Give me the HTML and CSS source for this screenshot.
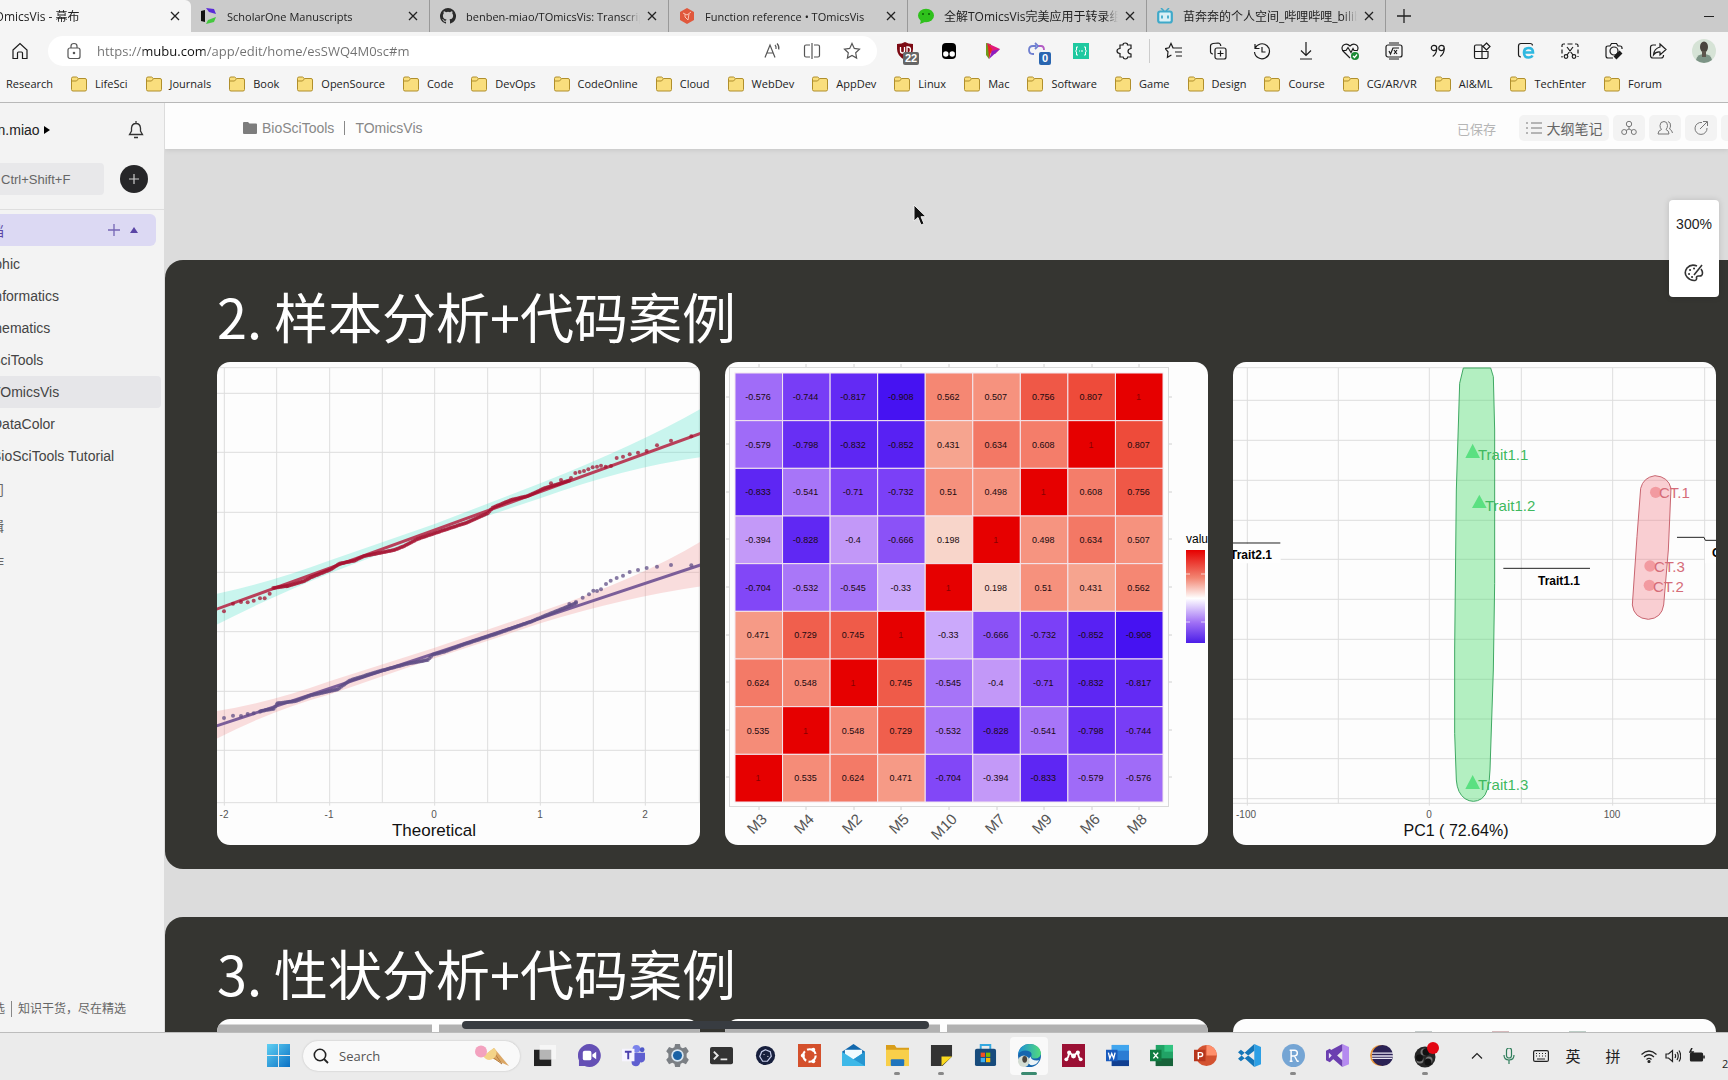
FILE: index.html
```html
<!DOCTYPE html>
<html lang="zh-CN">
<head>
<meta charset="utf-8">
<title>TOmicsVis - 幕布</title>
<link rel="stylesheet" href="styles.css">
</head>
<body>
<svg class="defs" aria-hidden="true">
  <defs>
    <symbol id="folder" viewBox="0 0 16 16"><path d="M.5 3V2.500Q.5 1 2 1h3.500l2 1.500H14q1.500 0 1.500 1.500v9.500Q15.500 15 14 15H2Q.5 15 .5 13.500z" fill="#f9de7d" stroke="#b08f2c"/><path d="M.5 5H5.500L7.500 2.800" fill="none" stroke="#b08f2c"/></symbol>
    <symbol id="close" viewBox="0 0 10 10"><path d="M1 1l8 8M9 1L1 9" stroke="#222" stroke-width="1.300"/></symbol>
    <linearGradient id="win" x1="0" y1="0" x2="1" y2="1"><stop offset="0" stop-color="#5fd0f3"/><stop offset="1" stop-color="#0a70c4"/></linearGradient>
    <linearGradient id="edge" x1="0" y1="0" x2="1" y2="0"><stop offset="0" stop-color="#1b8fd8"/><stop offset="1" stop-color="#53dc7b"/></linearGradient>
    <linearGradient id="legend" x1="0" y1="0" x2="0" y2="1"><stop offset="0" stop-color="#e60000"/><stop offset=".3" stop-color="#f28572"/><stop offset=".52" stop-color="#fff"/><stop offset=".78" stop-color="#a070f5"/><stop offset="1" stop-color="#4b1de8"/></linearGradient>
  </defs>
</svg>

<nav class="tabs" aria-label="Tabs">
  <div class="tab tab-active"><a href="#" class="tab-title">TOmicsVis - 幕布</a><button class="tab-close" aria-label="Close"><svg><use href="#close"/></svg></button></div>
  <div class="tab"><svg class="fav" viewBox="0 0 16 16"><path d="M0 3l4-1v12l-4-1z" fill="#111"/><path d="M5 0l8 1 2 5-7-2z" fill="#5a2bd8"/><path d="M5 16l8-2 2-5-8 3z" fill="#45c93f"/></svg><a href="#" class="tab-title">ScholarOne Manuscripts</a><button class="tab-close" aria-label="Close"><svg><use href="#close"/></svg></button></div>
  <div class="tab"><svg class="fav" viewBox="0 0 16 16"><path fill="#2b2b2b" d="M8 0a8 8 0 0 0-2.530 15.590c.4.070.55-.17.550-.38v-1.490c-2.230.48-2.700-.95-2.700-.95-.36-.92-.89-1.170-.89-1.170-.73-.5.050-.49.050-.49.810.060 1.230.83 1.230.83.720 1.230 1.880.87 2.340.67.070-.52.280-.87.510-1.070-1.780-.2-3.650-.89-3.650-3.950 0-.87.310-1.590.82-2.150-.08-.2-.36-1.020.080-2.120 0 0 .67-.21 2.200.82a7.600 7.600 0 0 1 4 0c1.530-1.040 2.200-.82 2.200-.82.440 1.100.16 1.920.080 2.120.51.560.82 1.270.82 2.150 0 3.070-1.870 3.750-3.650 3.950.29.250.54.730.54 1.480v2.190c0 .21.150.46.550.38A8 8 0 0 0 8 0z"/></svg><a href="#" class="tab-title">benben-miao/TOmicsVis: Transcriptome</a><button class="tab-close" aria-label="Close"><svg><use href="#close"/></svg></button></div>
  <div class="tab"><svg class="fav" viewBox="0 0 16 16"><path d="M8 0l7 4v8l-7 4-7-4V4z" fill="#e0583c"/><path d="M4 5l4 2 4-3M6 6v3l3 3M10 6l-1 6" stroke="#fbc5b5" fill="none"/></svg><a href="#" class="tab-title">Function reference • TOmicsVis</a><button class="tab-close" aria-label="Close"><svg><use href="#close"/></svg></button></div>
  <div class="tab"><svg class="fav" viewBox="0 0 16 16"><ellipse cx="8" cy="7.500" rx="8" ry="6.800" fill="#2fc11c"/><path d="M3 12l-1 4 5-2z" fill="#2fc11c"/><circle cx="5" cy="6" r="1" fill="#0b5d05"/><circle cx="11" cy="6" r="1" fill="#0b5d05"/></svg><a href="#" class="tab-title tab-cjk">全解TOmicsVis完美应用于转录组学</a><button class="tab-close" aria-label="Close"><svg><use href="#close"/></svg></button></div>
  <div class="tab"><svg class="fav" viewBox="0 0 16 16"><path d="M4 0l3 3M12 0L9 3" stroke="#3fa9c9" stroke-width="1.500"/><rect x="1.200" y="3.500" width="13.600" height="11" rx="2" fill="#d9f0f6" stroke="#3fa9c9" stroke-width="2.200"/><path d="M5 7.500v3M11 7.500v3" stroke="#3fa9c9" stroke-width="1.800"/></svg><a href="#" class="tab-title tab-cjk">苗奔奔的个人空间_哔哩哔哩_bilibili</a><button class="tab-close" aria-label="Close"><svg><use href="#close"/></svg></button></div>
  <button class="tab-new" aria-label="New tab"><svg viewBox="0 0 14 14"><path d="M7 0v14M0 7h14" stroke="#222" stroke-width="1.300"/></svg></button>
  <button class="minimize" aria-label="Minimize"><svg viewBox="0 0 14 14"><path d="M2 7.500h10" stroke="#222"/></svg></button>
</nav>

<div class="toolbar">
  <button class="home" aria-label="Home"><svg class="ic" viewBox="0 0 18 18"><path d="M2 8l7-6.500L16 8v8.500h-4.500V11q0-1-1-1h-3q-1 0-1 1v5.500H2z"/></svg></button>
  <form class="address">
    <svg class="ic lock" viewBox="0 0 18 18"><rect x="3" y="6" width="12" height="10.500" rx="2"/><path d="M6 6V4q0-2.500 3-2.500T12 4v2"/><circle cx="9" cy="11" r=".7" fill="#555"/></svg>
    <input class="url" aria-label="Address" value="https://mubu.com/app/edit/home/esSWQ4M0sc#m">
    <button class="in-address" type="button" aria-label="Read aloud"><svg class="ic" viewBox="0 0 18 18"><path d="M2 15.500L7 3l5 12.500M3.800 11h6.400M12 3q1.500 1.500 1 4M14 1.500q2.500 2.500 1.700 6"/></svg></button>
    <button class="in-address" type="button" aria-label="Split screen"><svg class="ic" viewBox="0 0 18 18"><path d="M7 3H3Q1.500 3 1.500 4.500v9Q1.500 15 3 15h4M11 3h4q1.500 0 1.500 1.500v9Q16.500 15 15 15h-4M9 1v16"/></svg></button>
    <button class="in-address" type="button" aria-label="Favorite"><svg class="ic" viewBox="0 0 18 18"><path d="M9 1.500l2.300 4.900 5.200.7-3.800 3.700.9 5.300L9 13.500l-4.600 2.600.9-5.300L1.500 7.100l5.200-.7z"/></svg></button>
  </form>
  <div class="exts">
    <button class="ext" aria-label="uBlock"><svg viewBox="0 0 18 18"><path d="M9 0q3 2 8 2v5q0 7-8 11-8-4-8-11V2q5 0 8-2z" fill="#7d0b14"/><path d="M4.500 5v4q0 2 2 2t2-2V5M11 5v6h1q2.500 0 2.500-3T12 5z" fill="none" stroke="#fff" stroke-width="1.300"/></svg><span class="badge">22</span></button>
    <button class="ext" aria-label="Tampermonkey"><svg viewBox="0 0 18 18"><rect x="2" y="1" width="14" height="16" rx="4"/><circle cx="5.800" cy="12" r="2.700" fill="#fff"/><circle cx="12.200" cy="12" r="2.700" fill="#fff"/></svg></button>
    <button class="ext" aria-label="Color picker"><svg viewBox="0 0 18 18"><path d="M2 1l5 1-2 15-3-4z" fill="#6d9c1c"/><path d="M3 1l13 6-5 5-6-2z" fill="#e0197c"/><path d="M4 2l4 5-3 10z" fill="#e8281c"/><path d="M16 7l-11 10 3-8z" fill="#8b1fc0"/></svg></button>
    <button class="ext" aria-label="Sync"><svg viewBox="0 0 18 18" fill="none" stroke-width="1.800"><path d="M8 4H5Q1 4 1 8t4 4h1" stroke="#6f7fd0"/><path d="M9 4h4q3 0 3 4" stroke="#b35cc4"/><path d="M7 1l3 3-3 3" stroke="#6f7fd0"/></svg><span class="badge badge-blue">0</span></button>
    <button class="ext" aria-label="JSON viewer"><svg viewBox="0 0 18 18"><rect x="1" y="1" width="16" height="16" fill="#1fc9a0"/><path d="M6 5H4.500v3L3.500 9l1 1v3H6M12 5h1.500v3l1 1-1 1v3H12M7 9h1M9 9h2" fill="none" stroke="#fff"/></svg></button>
    <button class="ext" aria-label="Extensions"><svg class="ic dark" viewBox="0 0 18 18"><path d="M4 3h3q0-2 2.300-2T11.500 3H15v3.500q-3 .5-3 2.700t3 2.800V15h-3.300q-.2 2-2.300 2t-2.300-2H4v-3.500q-3-.2-3-2.500t3-2.500z"/></svg></button>
    <span class="ext-sep"></span>
    <button class="ext" aria-label="Favorites"><svg class="ic dark" viewBox="0 0 18 18"><path d="M11 6L8 5.800 6 1.500 4 5.800l-3.800.8L3 9.800l-.6 5.500 4-2.300M11 6h6M10 10h7M11 14h6"/></svg></button>
    <button class="ext" aria-label="Collections"><svg class="ic dark" viewBox="0 0 18 18"><rect x="6" y="6" width="11" height="11" rx="2"/><path d="M4 12Q1.500 12 1.500 9.500V4Q1.500 2 4 1.500l5-.5q2.500 0 2.800 3M11.500 8.500v6M8.500 11.500h6"/></svg></button>
    <button class="ext" aria-label="History"><svg class="ic dark" viewBox="0 0 18 18"><path d="M2 6.500A7.500 7.500 0 1 1 1.500 10M2 2v4.500h4.500M9 5v5h3.500"/></svg></button>
    <button class="ext" aria-label="Downloads"><svg class="ic dark" viewBox="0 0 18 18"><path d="M9 0v13M4 8.500L9 13.500l5-5M3 17h12"/></svg></button>
    <button class="ext" aria-label="Browser essentials"><svg class="ic dark" viewBox="0 0 18 18"><path d="M9 16L2 9Q0 6 2 3.500q3.500-3 7 .5 3.500-3.500 7-.5Q18 6 16 9M1 8.500h4l2-3 3 5 2-4 1 2h3"/><circle cx="14" cy="14" r="4" fill="#1c8a36" stroke="none"/><path d="M12 14l1.500 1.500 2.500-3" stroke="#fff"/></svg></button>
    <button class="ext" aria-label="Math solver"><svg class="ic dark" viewBox="0 0 18 18"><rect x="1" y="3" width="16" height="12" rx="2"/><path d="M4 1h10M4 17h10M4 9l1.500 3L8 6h6M9 8l3 4M12 8l-3 4"/></svg></button>
    <button class="ext" aria-label="Citations"><svg class="ic dark" viewBox="0 0 18 18"><circle cx="5" cy="6" r="2.700"/><path d="M7.700 6q0 6-4 8.500"/><circle cx="12.500" cy="6" r="2.700"/><path d="M15.200 6q0 6-4 8.500"/></svg></button>
    <button class="ext" aria-label="Apps"><svg class="ic dark" viewBox="0 0 18 18"><path d="M9 3H3Q1.500 3 1.500 4.500V15q0 1.500 1.500 1.500h10.500Q15 16.500 15 15V9.500H1.500M9 3v13.500M13.500 1L17 4.500 13.500 8 10 4.500z"/></svg></button>
    <button class="ext" aria-label="IE mode"><svg class="ic dark" viewBox="0 0 18 18"><path d="M4 15Q1.500 15 1.500 12.500V4Q1.500 1.500 4 1.500h9q2.500 0 2.500 2"/><path d="M7 10.500h9q0-4.500-4.500-4.500T7 10.800t4.500 4.700q3 0 4-2" stroke="#2fb8e0" stroke-width="2.600"/></svg></button>
    <button class="ext" aria-label="Web capture"><svg class="ic dark" viewBox="0 0 18 18"><path d="M1 5V3.500Q1 2 2.500 2H4M6.500 2h5M14 2h1.500Q17 2 17 3.500V5M1 7.500v4M17 7.500v4M1 14v1.500M17 14v1M6 5l6 8M12 5l-6 8"/><circle cx="5" cy="14.500" r="1.800"/><circle cx="13" cy="14.500" r="1.800"/></svg></button>
    <button class="ext" aria-label="Screenshot"><svg class="ic dark" viewBox="0 0 18 18"><path d="M8 16H3q-2 0-2-2V6q0-2 2-2h2l1.500-2.500h5L13 4h2q2 0 2 2v1"/><circle cx="9" cy="9" r="4"/><path d="M10 16l6-6" stroke-width="4"/></svg></button>
    <button class="ext" aria-label="Share"><svg class="ic dark" viewBox="0 0 18 18"><path d="M7 3H4Q1.500 3 1.500 5.500v8Q1.500 16 4 16h8q2.500 0 2.500-2.500V13M11 2l6 5.500-6 5.500v-3q-4-.5-6.500 3Q5 6.500 11 5z"/></svg></button>
    <button class="profile" aria-label="Profile"><svg viewBox="0 0 24 24"><circle cx="12" cy="12" r="12" fill="#d6e3d6"/><path d="M4 21q1-6 8-6t8 6q-8 6-16 0z" fill="#7d9486"/><ellipse cx="12" cy="8" rx="4" ry="5.500" fill="#4a463f"/><path d="M10 12h4v6h-4z" fill="#5d564d"/></svg></button>
  </div>
</div>

<nav class="bookmarks" aria-label="Bookmarks">
  <a href="#">Research</a>
  <a href="#"><svg><use href="#folder"/></svg>LifeSci</a>
  <a href="#"><svg><use href="#folder"/></svg>Journals</a>
  <a href="#"><svg><use href="#folder"/></svg>Book</a>
  <a href="#"><svg><use href="#folder"/></svg>OpenSource</a>
  <a href="#"><svg><use href="#folder"/></svg>Code</a>
  <a href="#"><svg><use href="#folder"/></svg>DevOps</a>
  <a href="#"><svg><use href="#folder"/></svg>CodeOnline</a>
  <a href="#"><svg><use href="#folder"/></svg>Cloud</a>
  <a href="#"><svg><use href="#folder"/></svg>WebDev</a>
  <a href="#"><svg><use href="#folder"/></svg>AppDev</a>
  <a href="#"><svg><use href="#folder"/></svg>Linux</a>
  <a href="#"><svg><use href="#folder"/></svg>Mac</a>
  <a href="#"><svg><use href="#folder"/></svg>Software</a>
  <a href="#"><svg><use href="#folder"/></svg>Game</a>
  <a href="#"><svg><use href="#folder"/></svg>Design</a>
  <a href="#"><svg><use href="#folder"/></svg>Course</a>
  <a href="#"><svg><use href="#folder"/></svg>CG/AR/VR</a>
  <a href="#"><svg><use href="#folder"/></svg>AI&amp;ML</a>
  <a href="#"><svg><use href="#folder"/></svg>TechEnter</a>
  <a href="#"><svg><use href="#folder"/></svg>Forum</a>
</nav>

<div class="app">
  <aside class="side">
    <div class="user"><span class="user-name">ben.miao</span><svg class="caret" viewBox="0 0 6 8"><path d="M0 0l6 4-6 4z"/></svg><button class="bell" aria-label="Notifications"><svg viewBox="0 0 16 18" fill="none" stroke="#333" stroke-width="1.300"><path d="M8 0v2M1.500 13.500h13L12.500 10V7Q12 2.500 8 2.500T3.500 7v3zM6 16.500h4"/></svg></button></div>
    <div class="find"><button class="find-box">Ctrl+Shift+F</button><button class="add" aria-label="New"><svg viewBox="0 0 12 12"><path d="M6 1v10M1 6h10" stroke="#ccc" stroke-width="1.200"/></svg></button></div>
    <nav class="tree">
      <div class="root"><a href="#">我的文档</a><button aria-label="Add"><svg viewBox="0 0 12 12"><path d="M6 0v12M0 6h12" stroke="#7566b5" stroke-width="1.300"/></svg></button><svg class="tri" viewBox="0 0 8 6"><path d="M0 6l4-6 4 6z" fill="#5a45a5"/></svg></div>
      <a class="node" href="#">Graphic</a>
      <a class="node" href="#">Bioinformatics</a>
      <a class="node" href="#">Mathematics</a>
      <a class="node" href="#">BioSciTools</a>
      <a class="node leaf current" href="#">TOmicsVis</a>
      <a class="node leaf" href="#">DataColor</a>
      <a class="node leaf" href="#">BioSciTools Tutorial</a>
    </nav>
    <nav class="more"><a href="#">最近访问</a><a href="#">最近编辑</a><a href="#">我的协作</a></nav>
    <p class="tip"><a href="#">精选</a><span>知识干货，尽在精选</span></p>
  </aside>

  <main class="doc">
    <header class="doc-head">
      <svg class="crumb-ic" viewBox="0 0 14 12"><path d="M0 1q0-1 1-1h4l1.500 1.500H13q1 0 1 1V11q0 1-1 1H1q-1 0-1-1z" fill="#7d7d7d"/></svg>
      <a href="#">BioSciTools</a><span class="bar"></span><a href="#">TOmicsVis</a>
      <span class="saved">已保存</span>
      <button class="act act-wide"><svg viewBox="0 0 16 14"><path d="M0 2h2M0 7h2M0 12h2M5 2h11M5 7h11M5 12h11"/></svg>大纲笔记</button>
      <button class="act" aria-label="Mind map"><svg viewBox="0 0 16 16"><circle cx="8" cy="4" r="2.700"/><circle cx="3.200" cy="12" r="2.500"/><circle cx="12.800" cy="12" r="2.500"/><path d="M8 7v2M8 9l-3 1.500M8 9l3 1.500"/></svg></button>
      <button class="act" aria-label="Collaborate"><svg viewBox="0 0 16 16"><path d="M7 1.500q3.500 0 3.500 4 0 2.500-1.500 4 3 1 3 4.500H1q0-3.500 3.500-4.500-1.500-1.500-1.500-4 0-4 4-4zM11 1.500q3 1 2.500 4.500-.3 2-1 3 2.500 1 3 4"/></svg></button>
      <button class="act" aria-label="Share"><svg viewBox="0 0 16 16"><path d="M9 2.500A6 6 0 1 0 14 8M7 9l7-7M10 1.500h4.500V6"/></svg></button>
      <button class="act act-cut" aria-label="More"></button>
    </header>
    <div class="canvas">
      <section class="card">
        <h2>2. 样本分析+代码案例</h2>
        <div class="plots">
          <svg class="plot" viewBox="0 0 483 483">
            <g transform="translate(-6 -12) scale(.33333)">
              <path d="M40 53V1367M197 53V1358M356 53V1367M514 53V1358M671 53V1367M830 53V1358M988 53V1367M1147 53V1358M1303 53V1367M1465 53V1358M0 53H1480M0 130H1480M0 307H1480M0 487H1480M0 667H1480M0 845H1480M0 1024H1480M0 1201H1480M0 1358H1480" stroke="#dedede" stroke-width="3"/>
              <path d="M10 733Q170 700 360 630L671 522 988 400Q1300 275 1480 170V320Q1250 350 988 445L671 550 360 668Q170 745 10 828z" fill="#2fe0c4" fill-opacity=".25"/>
              <path d="M10 1084Q170 1060 360 992L671 893 988 785Q1300 680 1480 568V708Q1250 740 988 820L671 925 360 1032Q170 1085 10 1170z" fill="#f08080" fill-opacity=".25"/>
              <path d="M10 780L1480 246" stroke="#b8405a" stroke-width="9"/>
              <path d="M10 1130L1480 641" stroke="#7b5e99" stroke-width="9"/>
              <g id="qq-red" class="qq-red"></g>
              <g id="qq-violet" class="qq-violet"></g>
            </g>
            <g class="tick"><text x="7" y="456">-2</text><text x="112" y="456">-1</text><text x="217" y="456">0</text><text x="323" y="456">1</text><text x="428" y="456">2</text></g>
            <text class="axis axis-large" x="217" y="474">Theoretical</text>
          </svg>
          <svg class="plot" viewBox="0 0 483 483">
            <rect x="4.500" y="5.500" width="439" height="439" fill="none" stroke="#d9d9d9"/>
            <g id="heat" class="heat"></g>
            <g id="heat-axis" class="heat-axis"></g>
            <text class="legend" x="461" y="181">value</text>
            <rect x="461" y="188" width="19" height="93" fill="url(#legend)"/>
            <path d="M461 212h4M476 212h4M461 236h4M476 236h4M461 260h4M476 260h4" stroke="#fff" stroke-opacity=".7"/>
          </svg>
          <svg class="plot" viewBox="0 0 483 483">
            <g transform="translate(-13 -12) scale(.33333)">
              <path d="M82 53V1367M355 53V1360M628 53V1367M904 53V1360M1178 53V1367M1454 53V1360M0 53H1500M0 151H1500M0 271H1500M0 391H1500M0 511H1500M0 628H1500M0 748H1500M0 868H1500M0 988H1500M0 1107H1500M0 1226H1500M0 1346H1500M0 1360H1500" stroke="#dedede" stroke-width="3"/>
              <path d="M40 582H182V640H40zM1455 575H1500V640H1455z" fill="#fefefe"/>
              <path d="M730 54H812L820 80 824 240V700L820 960 810 1260Q808 1330 785 1346 760 1362 735 1346 712 1330 709 1290L704 1150V900L709 420 719 100z" fill="#4cdc6e" fill-opacity=".42" stroke="#3fa862" stroke-width="3"/>
              <path d="M1305 377Q1345 380 1353 415L1345 600 1331 765Q1325 805 1285 808 1242 805 1237 765L1251 560 1262 415Q1270 382 1305 377z" fill="#f3828c" fill-opacity=".38" stroke="#c8646f" stroke-width="3"/>
              <path d="M758 281l22 43h-44zM778 434l22 40h-44zM758 1275l22 42h-44z" fill="#5be081"/>
              <g fill="#f29aa0"><circle cx="1307" cy="427" r="17"/><circle cx="1290" cy="648" r="17"/><circle cx="1288" cy="706" r="17"/></g>
              <path d="M30 579H181M850 655H1110M1371 562H1452l4 9H1500" fill="none" stroke="#222" stroke-width="3"/>
            </g>
            <g class="trait-green"><text x="245" y="98">Trait1.1</text><text x="252" y="149">Trait1.2</text><text x="245" y="428">Trait1.3</text></g>
            <g class="trait-red"><text x="426" y="136">CT.1</text><text x="421" y="210">CT.3</text><text x="420" y="230">CT.2</text></g>
            <g class="trait"><text x="-3" y="197">Trait2.1</text><text x="305" y="223">Trait1.1</text><text x="479" y="195">CT.1</text></g>
            <g class="tick"><text x="13" y="456">-100</text><text x="196" y="456">0</text><text x="379" y="456">100</text></g>
            <text class="axis" x="223" y="474">PC1 ( 72.64%)</text>
          </svg>
        </div>
      </section>
      <section class="card">
        <h2>3. 性状分析+代码案例</h2>
        <div class="plots">
          <svg class="plot" viewBox="0 0 483 483"><path d="M0 5.500H215V483H0zM222 5.500H483V483H222z" fill="#b1b1b1"/></svg>
          <svg class="plot" viewBox="0 0 483 483"><path d="M0 5.500H215V483H0zM222 5.500H483V483H222z" fill="#b1b1b1"/></svg>
          <svg class="plot" viewBox="0 0 483 483"><path d="M182 12h17v9h-17z" fill="#c4cbca"/><path d="M259 12h17v9h-17z" fill="#d5b9bb"/><path d="M336 12h17v9h-17z" fill="#bdcdc6"/></svg>
        </div>
      </section>
      <div class="hscroll"></div>
    </div>
    <div class="zoom-panel"><button>300%</button><button aria-label="Theme"><svg viewBox="0 0 20 18" fill="none" stroke="#333" stroke-width="1.600"><path d="M13 2Q7-.5 3 4-.5 9 3 13q3.500 4 8 3.500 2-.5 1.500-2.500-.3-2 2-2 4 .5 4-3 0-2-1.500-4M18 1l-8 10"/><path d="M6 6h.1M10 4.500h.1M5 10h.1M8 13h.1" stroke-width="2" stroke-linecap="round"/></svg></button></div>
  </main>
</div>

<footer class="taskbar">
  <div class="apps">
    <button class="task" aria-label="Start"><svg viewBox="0 0 24 24"><path d="M0 0h11.500v11.500H0zM12.500 0H24v11.500H12.500zM0 12.500h11.500V24H0zM12.500 12.500H24V24H12.500z" fill="url(#win)"/></svg></button>
    <label class="search"><svg viewBox="0 0 16 16"><circle cx="7" cy="7" r="5.700" fill="none" stroke="#222" stroke-width="1.600"/><path d="M11 11l4 4" stroke="#222" stroke-width="1.800"/></svg><input type="text" placeholder="Search" aria-label="Search"><svg class="cone" viewBox="0 0 36 22"><path d="M11 10l9-7 15 18z" fill="#dba765"/><path d="M14 9l14 10M19 6l9 13" stroke="#b97f3e"/><path d="M9 11q5 7 11 2 5-5 0-10z" fill="#f4d488"/><circle cx="7" cy="6.500" r="6" fill="#f3a2bf"/></svg></label>
    <button class="task" aria-label="Task view"><svg viewBox="0 0 24 24"><path d="M0 6h18v17H0z" fill="#222"/><path d="M6 1h17v15H6z" fill="#f6f6f6"/><path d="M6 6h12v10H6z" fill="#b5b5b5"/></svg></button>
    <button class="task" aria-label="Chat"><svg viewBox="0 0 24 24"><path d="M12 0a12 12 0 1 1-5 23H1v-6A12 12 0 0 1 12 0z" fill="#6550b5"/><rect x="5" y="7" width="9" height="10" rx="2" fill="#fff"/><path d="M15 11l4-3v8l-4-3z" fill="#fff"/></svg></button>
    <button class="task" aria-label="Teams"><svg viewBox="0 0 24 24"><circle cx="15" cy="5" r="4" fill="#7b83eb"/><circle cx="21" cy="6" r="2.500" fill="#5059c9"/><path d="M10 9h9v10q-1 5-6 4-3-1-3-4zM19 9h5v7q-1 4-5 3z" fill="#5f5fd0"/><path d="M0 5h13v13H0z" fill="#f6f4ff"/><path d="M3 8h7M6.500 8v8" stroke="#4b3fae" stroke-width="2"/></svg></button>
    <button class="task" aria-label="Settings"><svg viewBox="0 0 24 24"><path d="M9.500 0h5l.8 3.500 2.200 1L20.800 3l3 4.500-2.300 2.700v3.600l2.300 2.700-3 4.500-3.300-1.500-2.200 1-.8 3.500h-5l-.8-3.500-2.200-1L3.200 21l-3-4.500 2.300-2.700v-3.600L.2 7.500l3-4.500 3.300 1.500 2.200-1z" fill="#7b7f84"/><circle cx="12" cy="12" r="6.500" fill="#d9e7f2"/><circle cx="12" cy="12" r="4.700" fill="#1b62a5"/></svg></button>
    <button class="task" aria-label="Terminal"><svg viewBox="0 0 24 24"><rect y="3" width="24" height="18" rx="2" fill="#333"/><path d="M4 8l4 4-4 4M11 16h7" fill="none" stroke="#e8e8e8" stroke-width="2"/></svg></button>
    <button class="task" aria-label="Clock"><svg viewBox="0 0 24 24"><circle cx="12" cy="12" r="10" fill="#171f3d"/><path d="M12 6l5 2 1 5-4 5H9l-3-5 2-5z" fill="none" stroke="#c3cae8" stroke-width="1.300"/><path d="M10 11h1M14 13h1" stroke="#fff"/></svg></button>
    <button class="task" aria-label="Ubuntu"><svg viewBox="0 0 24 24"><path d="M0 0h24v24H0z" fill="#d4502c"/><circle cx="12" cy="12" r="6.500" fill="none" stroke="#fff" stroke-width="2.200" stroke-dasharray="11 2.600"/><circle cx="5" cy="12" r="2" fill="#fff"/><circle cx="16" cy="6" r="2" fill="#fff"/><circle cx="16" cy="18" r="2" fill="#fff"/></svg></button>
    <button class="task" aria-label="Mail"><svg viewBox="0 0 24 24"><path d="M0 8l12-8 12 8v15H0z" fill="#1268ad"/><path d="M3 6h18v10H3z" fill="#f1fbff"/><path d="M0 8l12 8L24 8v15H0z" fill="#3db8e8"/><path d="M24 8v15L12 16z" fill="#2696d1"/></svg></button>
    <button class="task run" aria-label="File Explorer"><svg viewBox="0 0 24 24"><path d="M0 1h9l2 3h13v19H0z" fill="#d99e1b"/><path d="M0 6h24v17H0z" fill="#f8cf4a"/><rect x="5" y="16" width="14" height="7" rx="1" fill="#1f74bd"/></svg></button>
    <button class="task run" aria-label="Sticky Notes"><svg viewBox="0 0 24 24"><path d="M1 1h22v12L13 23H1z" fill="#333"/><path d="M12 13h11L12 23z" fill="#fbd91e"/></svg></button>
    <button class="task" aria-label="Store"><svg viewBox="0 0 24 24"><path d="M7 6V1h10v5" fill="none" stroke="#35a8e0" stroke-width="2"/><rect x="1" y="5" width="22" height="18" rx="2" fill="#174b7c"/><path d="M7 9h4.500v4.500H7z" fill="#f25022"/><path d="M12.500 9H17v4.500h-4.500z" fill="#7fba00"/><path d="M7 14.500h4.500V19H7z" fill="#3cb0ef"/><path d="M12.500 14.500H17V19h-4.500z" fill="#ffb900"/></svg></button>
    <button class="task run active" aria-label="Edge"><svg viewBox="0 0 24 24"><circle cx="12" cy="12" r="12" fill="#1666ae"/><path d="M0 11Q2 0 12 0t12 9q0 6-7 6-4 0-3-3 1-4-4-5-7-1-10 4z" fill="url(#edge)"/><path d="M13 13q1 5 9 4-3 6-9 5-5-3 0-9z" fill="#ecf4f7"/><circle cx="6" cy="18" r="6" fill="#d3dcd2"/><ellipse cx="7" cy="16" rx="2.500" ry="3.500" fill="#4a463f"/></svg></button>
    <button class="task" aria-label="Mendeley"><svg viewBox="0 0 24 24"><path d="M0 0h24v24H0z" fill="#9b1034"/><g fill="#fff"><circle cx="12" cy="12.500" r="2.600"/><circle cx="7.500" cy="9" r="2.200"/><circle cx="16.500" cy="9" r="2.200"/><circle cx="4.500" cy="16" r="2"/><circle cx="19.500" cy="16" r="2"/></g><path d="M4.500 16q2-1 3-7 2 1 4.500 3.500 2-2.500 4.500-3.500 1 6 3 7" fill="none" stroke="#fff" stroke-width="2"/></svg></button>
    <button class="task" aria-label="Word"><svg viewBox="0 0 24 24"><path d="M6 1h18v22H6z" fill="#2b7cd3"/><path d="M6 1h18v6H6z" fill="#41a5ee"/><path d="M6 17h18v6H6z" fill="#103f91"/><path d="M0 6h12v12H0z" fill="#185abd"/><path d="M2.500 9l1.500 6 2-5 2 5 1.500-6" fill="none" stroke="#fff" stroke-width="1.400"/></svg></button>
    <button class="task" aria-label="Excel"><svg viewBox="0 0 24 24"><path d="M6 1h18v22H6z" fill="#21a366"/><path d="M15 1h9v7h-9z" fill="#33c481"/><path d="M6 15h18v8H6z" fill="#17633a"/><path d="M0 6h12v12H0z" fill="#107c41"/><path d="M3.500 9l5 6M8.500 9l-5 6" stroke="#fff" stroke-width="1.600"/></svg></button>
    <button class="task" aria-label="PowerPoint"><svg viewBox="0 0 24 24"><circle cx="13" cy="12" r="11" fill="#d35230"/><path d="M13 1a11 11 0 0 1 11 11H13z" fill="#ff8f6b"/><path d="M0 6h12v12H0z" fill="#b7361c"/><path d="M4.500 16V9H7q2 0 2 2t-2 2H4.500" fill="none" stroke="#fff" stroke-width="1.500"/></svg></button>
    <button class="task" aria-label="VS Code"><svg viewBox="0 0 24 24"><path d="M17 0l7 3v18l-7 3z" fill="#2c9fe5"/><path d="M17 0v7L3 18l-3-2.500zM17 24v-7L3 6 0 8.500z" fill="#1376b9"/></svg></button>
    <button class="task run" aria-label="RStudio"><svg viewBox="0 0 24 24"><circle cx="12" cy="12" r="12" fill="#75a5d4"/><path d="M8 18h3M9.500 18V6.500M8 6.500h5q3 0 3 3t-3 3H9.500M13 12.500l3 5.500h1.500" fill="none" stroke="#fff" stroke-width="1.500"/></svg></button>
    <button class="task" aria-label="Visual Studio"><svg viewBox="0 0 24 24"><path d="M17 0l7 3v18l-7 3z" fill="#b58af0"/><path d="M17 0v7L4 19l-4-2V7l4-2 13 12v7L0 9" fill="#6b3fb0"/><path d="M3 9v6l3-3z" fill="#ebe3f7"/></svg></button>
    <button class="task" aria-label="Eclipse"><svg viewBox="0 0 24 24"><circle cx="11" cy="12" r="11" fill="#e9963a"/><circle cx="13" cy="12" r="11" fill="#2b2255"/><path d="M2 9.500h22M2 12.500h22M2 15h21" stroke="#e7e4f2" stroke-width="1.400"/></svg></button>
    <button class="task run" aria-label="OBS"><svg class="obs" viewBox="0 0 28 28"><circle cx="14" cy="15" r="10.500" fill="#262626"/><g fill="#777"><circle cx="13" cy="10" r="3.500"/><circle cx="9" cy="18" r="3.500"/><circle cx="18" cy="18" r="3.500"/></g><g fill="#111"><circle cx="15" cy="10" r="3.500"/><circle cx="8.500" cy="16" r="3.500"/><circle cx="17" cy="20" r="3.500"/></g><circle cx="22" cy="6" r="6" fill="#e30613"/></svg></button>
  </div>
  <div class="tray">
    <button aria-label="Hidden icons"><svg viewBox="0 0 16 16"><path d="M3 10.500l5-5 5 5"/></svg></button>
    <button aria-label="Microphone"><svg viewBox="0 0 16 16"><rect x="5.500" y="0" width="5" height="10" rx="2.500" stroke="#2e7d5a"/><path d="M3 7q0 5 5 5t5-5M8 12v4" stroke="#2e7d5a"/></svg></button>
    <button aria-label="Keyboard"><svg viewBox="0 0 16 16"><rect x=".6" y="2.600" width="14.800" height="10.800" rx="1.500"/><path d="M3 5.500h1M6 5.500h1M9 5.500h1M12 5.500h1M3 8h1M6 8h1M9 8h1M12 8h1M4 11h8"/></svg></button>
    <button class="ime">英</button>
    <button class="ime ime-wide">拼</button>
    <button class="sys" aria-label="Wi-Fi"><svg viewBox="0 0 16 16"><path d="M.5 6.500q7.500-7 15 0M3 9q5-4.500 10 0M5.500 11.500q2.500-2.200 5 0"/><circle cx="8" cy="13.500" r="1" fill="#222"/></svg></button>
    <button class="sys" aria-label="Volume"><svg viewBox="0 0 16 16"><path d="M1 6v4h2.500L7.500 13.500v-11L3.500 6zM10 6q1.200 2 0 4M12 4q2.500 4 0 8M14 2.500q3.500 5.500 0 11"/></svg></button>
    <button class="sys" aria-label="Battery"><svg viewBox="0 0 16 16"><rect x="1.500" y="5" width="12" height="8" rx="1" fill="#222"/><path d="M15 7.500v3M3 0L1 4h3L2 8" stroke-width="1.600"/></svg></button>
    <span class="clock">2</span>
  </div>
</footer>

<svg class="cursor" viewBox="0 0 14 22"><path d="M1 1v16l4-3.500L8 21l3-1.300-3-7H13z" fill="#111" stroke="#eee"/></svg>
<script src="script.js"></script>
</body>
</html>
```
FILE: styles.css
```css
* { box-sizing: border-box; }
body {
  margin: 0;
  height: 100vh;
  display: flex;
  flex-direction: column;
  overflow: hidden;
  font-family: "Open Sans", "Noto Sans CJK SC", sans-serif;
  font-size: 11px;
  color: #222;
  background: #f5f5f5;
}
button { border: 0; padding: 0; background: none; font: inherit; color: inherit; display: flex; align-items: center; justify-content: center; flex: none; }
input { border: 0; padding: 0; background: none; font: inherit; outline: 0; min-width: 0; }
a { color: inherit; text-decoration: none; }
svg { flex: none; display: block; }
.defs { position: absolute; width: 0; height: 0; }

/* tab strip */
.tabs { display: flex; height: 32px; flex: none; background: #cbcbcb; }
.tab { display: flex; align-items: center; width: 239px; padding: 0 10px; border-right: 1px solid #999; }
.tab-active { width: 191px; padding-left: 0; border: 0; background: #f5f5f5; border-radius: 0 6px 0 0; }
.tab-active .tab-title { margin-left: -12px; }
.fav { width: 16px; height: 16px; margin-right: 10px; }
.tab-title { flex: 1; overflow: hidden; white-space: nowrap; mask-image: linear-gradient(90deg, #000 92%, transparent); }
.tab-cjk, .tab-active .tab-title { font-size: 12px; }
.tab-close { width: 12px; height: 20px; margin-left: 6px; }
.tab-close svg { width: 10px; height: 10px; }
.tab-new { width: 36px; }
.tab-new svg, .minimize svg { width: 14px; height: 14px; }
.minimize { width: 38px; margin-left: auto; }

/* toolbar */
.toolbar { display: flex; align-items: center; height: 38px; flex: none; }
.home { width: 40px; margin-right: 8px; }
.ic { width: 18px; height: 18px; fill: none; stroke: #555; stroke-width: 1.2; }
.dark, .home .ic { stroke: #1c1c1c; }
.address { flex: 1; display: flex; align-items: center; height: 30px; margin-right: 6px; padding: 0 5px 0 17px; border-radius: 15px; background: #fff; }
.lock { margin-right: 14px; }
.url { flex: 1; font-size: 13px; color: #707070; background: linear-gradient(90deg, #707070 46px, #111 46px 108px, #707070 108px); -webkit-background-clip: text; background-clip: text; -webkit-text-fill-color: transparent; }
.in-address { width: 40px; }
.exts { display: flex; align-items: center; }
.ext { width: 44px; height: 30px; position: relative; }
.ext svg { width: 18px; height: 18px; }
.ext-sep { width: 1px; height: 24px; margin: 0 2px; background: #ccc; }
.badge { position: absolute; left: 20px; top: 16px; padding: 0 2px; border-radius: 2px; background: #666; color: #fff; font: bold 11px/13px "Liberation Sans", sans-serif; }
.badge-blue { left: 24px; padding: 0 3px; background: #2a66b0; }
.profile { width: 48px; }
.profile svg { width: 24px; height: 24px; }

/* bookmarks */
.bookmarks { display: flex; align-items: center; gap: 18px; height: 33px; flex: none; padding: 0 6px 5px; border-bottom: 1px solid #b8b8b8; white-space: nowrap; }
.bookmarks a { display: flex; align-items: center; gap: 8px; }
.bookmarks svg { width: 16px; height: 16px; }

/* application */
.app { flex: 1; display: flex; min-height: 0; font-family: "Liberation Sans", "Noto Sans CJK SC", sans-serif; font-size: 14px; }
.side { width: 165px; flex: none; display: flex; flex-direction: column; overflow: hidden; background: #f3f3f3; border-right: 1px solid #dcdcdc; white-space: nowrap; }
.user { display: flex; align-items: center; height: 54px; padding-right: 20px; }
.user-name { margin-left: -18px; }
.caret { width: 6px; height: 8px; margin-left: 4px; }
.bell { margin-left: auto; }
.bell svg { width: 16px; height: 18px; }
.find { display: flex; align-items: center; justify-content: space-between; height: 53px; padding: 0 16px 8px 0; border-bottom: 1px solid #dedede; }
.find-box { width: 104px; height: 32px; padding-left: 1px; justify-content: flex-start; border-radius: 0 4px 4px 0; background: #e8e8ea; color: #666; font-size: 13px; }
.add { width: 28px; height: 28px; border-radius: 50%; background: #262628; }
.add svg, .root svg { width: 12px; height: 12px; }
.tree { display: flex; flex-direction: column; padding-top: 4px; color: #444; }
.root { display: flex; align-items: center; height: 32px; width: 156px; margin-bottom: 2px; padding-right: 18px; border-radius: 0 6px 6px 0; background: #dcd9f3; color: #5a45a5; }
.root a { margin: 0 auto 0 -52px; }
.root .tri { width: 8px; height: 6px; margin-left: 10px; }
.node { width: 161px; line-height: 32px; text-indent: -29px; border-radius: 0 4px 4px 0; }
.leaf { text-indent: -8px; }
.current { background: #e6e6e9; }
.more { display: flex; flex-direction: column; color: #666; }
.more a { line-height: 36px; text-indent: -52px; }
.tip { display: flex; align-items: center; margin: auto 0 15px; font-size: 12px; line-height: 16px; color: #666; }
.tip a { margin: 0 6px 0 -19px; }
.tip span { padding-left: 6px; border-left: 1px solid #888; }

.doc { flex: 1; min-width: 0; display: flex; flex-direction: column; position: relative; overflow: hidden; }
.doc-head { display: flex; align-items: center; height: 46px; flex: none; padding: 4px 0 0 78px; overflow: hidden; background: #fdfdfd; color: #888; box-shadow: 0 1px 5px #c4c4c4; z-index: 1; }
.crumb-ic { width: 14px; height: 12px; margin-right: 5px; }
.bar { width: 1px; height: 14px; margin: 0 10px; background: #888; }
.saved { margin: 0 23px 0 auto; font-size: 13px; color: #b5b5b5; }
.act { width: 32px; height: 26px; margin-right: 4px; border-radius: 5px; background: #f3f3f3; color: #666; }
.act svg { width: 16px; height: 16px; fill: none; stroke: #777; }
.act-wide { width: 90px; gap: 5px; }
.act-cut { width: 7px; margin: 0; border-radius: 5px 0 0 5px; }

.canvas { flex: 1; min-height: 0; display: flex; flex-direction: column; gap: 48px; padding-top: 111px; position: relative; overflow: hidden; background: #dcdcdc; }
.card { flex: none; padding: 22px 0 24px 52px; border-radius: 18px 0 0 18px; background: #353531; overflow: hidden; }
h2 { margin: 0; height: 80px; font: 400 54px/68px "Noto Sans CJK SC", sans-serif; color: #fff; white-space: nowrap; }
.plots { display: flex; gap: 25px; }
.plot { width: 483px; height: 483px; border-radius: 13px; background: #fdfdfd; overflow: hidden; font-family: "Liberation Sans", sans-serif; }
.qq-red { fill: #a51230; fill-opacity: 0.75; }
.qq-violet { fill: #5f4d86; fill-opacity: 0.75; }
.tick { font-size: 10px; fill: #555; text-anchor: middle; }
.axis { font-size: 16px; fill: #111; text-anchor: middle; }
.axis-large { font-size: 17px; }
.heat { font-size: 9px; fill: #1a0a10; text-anchor: middle; }
.heat-axis { font-size: 15px; fill: #555; text-anchor: end; }
.legend { font-size: 12px; }
.trait-green { font-size: 15px; fill: #3fb95f; }
.trait-red { font-size: 15px; fill: #d56c78; }
.trait { font-size: 12px; font-weight: bold; }
.hscroll { position: absolute; left: 297px; bottom: 3px; width: 467px; height: 8px; border-radius: 4px; background: #383c41; }
.zoom-panel { position: absolute; right: 9px; top: 97px; z-index: 2; width: 50px; padding: 8px 0; border-radius: 4px; background: #fff; box-shadow: 0 0 6px rgba(0, 0, 0, 0.15); display: flex; flex-direction: column; align-items: center; gap: 17px; }
.zoom-panel button { height: 32px; }
.zoom-panel svg { width: 20px; height: 18px; }

/* taskbar */
.taskbar { display: flex; align-items: center; justify-content: space-between; height: 48px; flex: none; padding: 0 0 2px 256px; border-top: 1px solid #bcbcbc; background: #ebebeb; }
.apps, .tray { display: flex; align-items: center; flex: none; }
.task { width: 44px; height: 38px; position: relative; }
.task svg { width: 23px; height: 23px; }
.task .obs { width: 28px; height: 28px; }
.run::after { content: ""; position: absolute; bottom: 0; width: 6px; height: 3px; border-radius: 2px; background: #888; }
.active::before { content: ""; position: absolute; inset: 0 3px; z-index: -1; border-radius: 4px; background: #f9f9f9; }
.active { z-index: 0; }
.active::after { width: 16px; background: #3a8a70; }
.search { display: flex; align-items: center; width: 217px; height: 30px; margin: 0 3px; padding: 0 10px; border-radius: 15px; background: #f9f9f9; box-shadow: 0 0 2px #bbb; }
.search svg { width: 16px; height: 16px; margin-right: 10px; }
.search input { flex: 1; font-size: 13px; }
.search input::placeholder { color: #555; }
.search .cone { width: 36px; height: 22px; margin: 0; }
.tray svg { width: 16px; height: 16px; fill: none; stroke: #222; stroke-width: 1.2; }
.tray button { width: 32px; }
.tray .ime { font-size: 15px; }
.tray .ime-wide { width: 48px; }
.tray .sys { width: 24px; }
.clock { width: 6px; margin: 16px 0 0 13px; font-size: 11px; }
.cursor { position: absolute; left: 53%; margin-left: -3px; top: 204px; width: 14px; height: 22px; }
```
FILE: script.js
```js
const SVG = "http://www.w3.org/2000/svg";
function add(parent, name, attrs, text) {
  const el = document.createElementNS(SVG, name);
  for (const key in attrs) el.setAttribute(key, attrs[key]);
  if (text !== undefined) el.textContent = text;
  parent.appendChild(el);
}

// Quantile points: the loose tails, then the dense middle that follows a path
const red = [[39,784],[66,761],[90,756],[110,757],[128,752],[147,745],[161,745],[176,731],[1020,400],[1050,390],[1080,384],[1093,369],[1106,366],[1119,363],[1132,358],[1145,352],[1158,350],[1170,347],[1184,350],[1200,348],[1217,324],[1236,320],[1256,313],[1281,308],[1307,303],[1338,286],[1380,272],[1441,259]];
const redPath = [[187,714],[230,708],[280,693],[300,682],[360,658],[385,641],[430,632],[460,618],[550,600],[580,588],[620,567],[700,540],[770,517],[830,490],[845,473],[900,450],[950,438],[1000,415],[1080,390]];
const violet = [[39,1104],[66,1097],[90,1098],[110,1092],[128,1090],[147,1085],[1075,762],[1095,756],[1115,743],[1134,733],[1147,722],[1158,723],[1170,718],[1185,702],[1199,692],[1217,684],[1236,677],[1256,666],[1281,660],[1307,654],[1338,650],[1380,645],[1441,646]];
const violetPath = [[150,1083],[188,1076],[200,1060],[255,1053],[300,1036],[380,1018],[415,992],[500,965],[590,941],[650,930],[665,914],[700,905],[760,883],[860,850],[960,815],[1010,794],[1075,768],[1100,757]];
function scatter(id, tails, path) {
  const group = document.getElementById(id);
  for (const [x, y] of tails) add(group, "circle", { cx: x, cy: y, r: 6 });
  for (let i = 1; i < path.length; i++) {
    const [x0, y0] = path[i - 1], [x1, y1] = path[i];
    for (let x = x0; x < x1; x += 5) {
      add(group, "circle", { cx: x, cy: y0 + (y1 - y0) * (x - x0) / (x1 - x0), r: 6 });
    }
  }
}
scatter("qq-red", red, redPath);
scatter("qq-violet", violet, violetPath);

// Correlation matrix, top row first
const names = ["M3", "M4", "M2", "M5", "M10", "M7", "M9", "M6", "M8"];
const rows = [
  [-0.576, -0.744, -0.817, -0.908, 0.562, 0.507, 0.756, 0.807, 1],
  [-0.579, -0.798, -0.832, -0.852, 0.431, 0.634, 0.608, 1, 0.807],
  [-0.833, -0.541, -0.71, -0.732, 0.51, 0.498, 1, 0.608, 0.756],
  [-0.394, -0.828, -0.4, -0.666, 0.198, 1, 0.498, 0.634, 0.507],
  [-0.704, -0.532, -0.545, -0.33, 1, 0.198, 0.51, 0.431, 0.562],
  [0.471, 0.729, 0.745, 1, -0.33, -0.666, -0.732, -0.852, -0.908],
  [0.624, 0.548, 1, 0.745, -0.545, -0.4, -0.71, -0.832, -0.817],
  [0.535, 1, 0.548, 0.729, -0.532, -0.828, -0.541, -0.798, -0.744],
  [1, 0.535, 0.624, 0.471, -0.704, -0.394, -0.833, -0.579, -0.576]
];
const stops = [[-0.908,70,18,242],[-0.83,95,39,243],[-0.73,124,64,247],[-0.576,160,108,248],[-0.4,194,152,248],[-0.33,203,169,251],[0,255,255,255],[0.198,248,213,202],[0.431,246,164,143],[0.51,246,145,125],[0.634,243,120,101],[0.75,239,90,72],[0.807,238,75,58],[1,230,0,0]];
function colour(v) {
  let i = 1;
  while (v > stops[i][0]) i++;
  const a = stops[i - 1], b = stops[i], t = (v - a[0]) / (b[0] - a[0]);
  return "rgb(" + [1, 2, 3].map(k => Math.round(a[k] + (b[k] - a[k]) * t)).join(",") + ")";
}
const heat = document.getElementById("heat");
const size = 428 / 9;
rows.forEach((row, r) => row.forEach((v, c) => {
  const x = 10 + c * size, y = 11 + r * 429 / 9;
  add(heat, "rect", { x, y, width: size, height: 429 / 9, fill: colour(v), stroke: "#f3e6ee" });
  add(heat, "text", v === 1 ? { x: x + 23, y: y + 27, fill: "#8a0000" } : { x: x + 23, y: y + 27 }, v);
}));
const axis = document.getElementById("heat-axis");
names.forEach((name, c) => {
  const x = Math.round(10 + (c + 0.5) * size);
  add(axis, "path", { d: `M${x} 445v3M${x} 2v3M1 ${x + 1}h3M444 ${x + 1}h3`, stroke: "#d0d0d0" });
  add(axis, "text", { transform: `translate(${x + 9} 458) rotate(-45)` }, name);
});
```
